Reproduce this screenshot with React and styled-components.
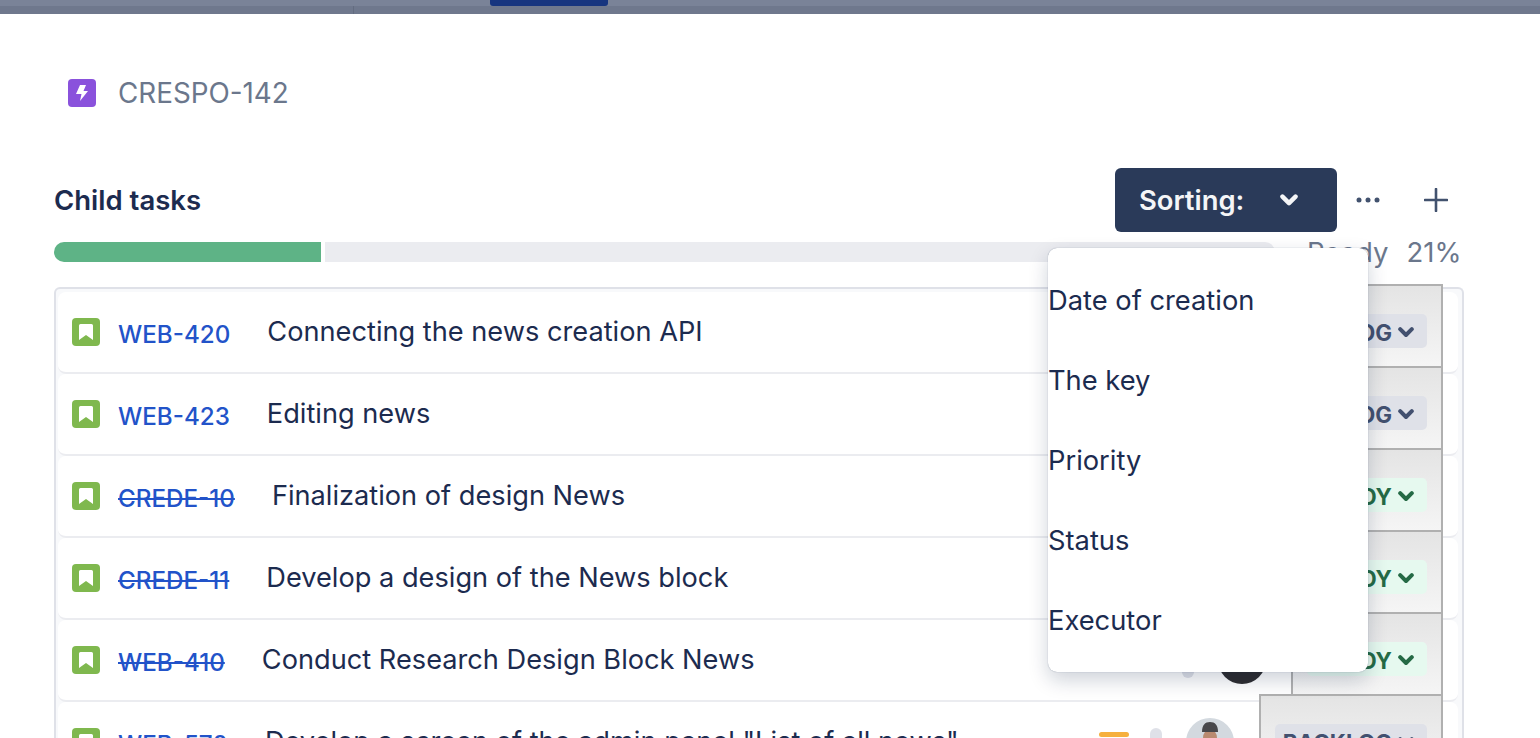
import React from "react";
import styled, { createGlobalStyle } from "styled-components";

const Global = createGlobalStyle`
  html, body { margin: 0; padding: 0; background: #fff; overflow: hidden; }
  body { font-family: Inter, "Liberation Sans", sans-serif; color: #172b4d; }
  #root { height: 738px; overflow: hidden; }
  * { box-sizing: border-box; }
`;

const TopBar = styled.header`
  height: 14px;
  background: #6f788d;
  display: flex;
  flex-direction: column;
`;
const TopTabs = styled.div`
  height: 6px;
  background: #7a8398;
  padding-left: 490px;
`;
const ActiveTab = styled.div`
  width: 118px;
  height: 6px;
  background: #17357f;
  border-radius: 0 0 3px 3px;
`;
const TopStrip = styled.div`
  flex: 1;
  padding-left: 353px;
`;
const StripDivider = styled.div`
  width: 1px;
  height: 100%;
  background: #636c80;
`;

const Main = styled.main`
  padding: 65px 76px 0 54px;
`;
const IssueHead = styled.div`
  display: flex;
  align-items: center;
  gap: 22px;
  height: 28px;
  padding-left: 14px;
`;
const IssueIcon = styled.span`
  width: 28px;
  height: 28px;
  border-radius: 4px;
  background: ${(p) => p.$bg};
  display: flex;
  align-items: center;
  justify-content: center;
  flex: none;
`;
const IssueKey = styled.span`
  font-size: 27.8px;
  color: #6b778c;
`;

const Toolbar = styled.div`
  display: flex;
  align-items: center;
  height: 64px;
  margin-top: 61px;
  padding-right: 16px;
`;
const Title = styled.h2`
  margin: 0;
  font-size: 27.5px;
  font-weight: 600;
  color: #1c2b4f;
  flex: 1;
`;
const SortWrap = styled.div`
  position: relative;
  width: 222px;
  height: 64px;
`;
const SortButton = styled.button`
  width: 100%;
  height: 100%;
  border: 0;
  border-radius: 6px;
  background: #2a3a59;
  color: #f4f5f7;
  font: 600 27.4px Inter, sans-serif;
  display: flex;
  align-items: center;
  padding: 0 39px 0 24px;
  justify-content: space-between;
`;
const Menu = styled.ul`
  position: absolute;
  z-index: 5;
  top: 80px;
  left: -67px;
  width: 320px;
  height: 424px;
  margin: 0;
  padding: 12px 0;
  list-style: none;
  background: #fff;
  border-radius: 9px;
  box-shadow: 0 0 1px rgba(9, 30, 66, 0.45), 0 8px 20px rgba(9, 30, 66, 0.2);
`;
const MenuItem = styled.li`
  height: 80px;
  display: flex;
  align-items: center;
  font-size: 27.3px;
  color: #1c2b4f;
`;
const ToolIcon = styled.button`
  border: 0;
  padding: 0;
  background: none;
  display: flex;
  margin-left: ${(p) => p.$ml}px;
`;
const ProgressRow = styled.div`
  display: flex;
  align-items: center;
  height: 20px;
  margin-top: 10px;
`;
const BarDone = styled.div`
  width: 267px;
  height: 20px;
  flex: none;
  background: #5eb386;
  border-radius: 10px 0 0 10px;
`;
const BarRest = styled.div`
  width: 950px;
  height: 20px;
  flex: none;
  margin-left: 4px;
  background: #ebecf0;
  border-radius: 0 10px 10px 0;
`;
const ProgressLabel = styled.span`
  font-size: 27.5px;
  color: #6b778c;
  margin-left: ${(p) => p.$ml}px;
  white-space: nowrap;
`;

const List = styled.div`
  width: 1410px;
  height: 460px;
  margin-top: 25px;
  padding: 3px 4px 0 2px;
  border: 2px solid #dfe1e8;
  border-bottom: 0;
  border-radius: 6px 6px 0 0;
  background: #f8f9fb;
`;
const Row = styled.div`
  height: 82px;
  display: flex;
  align-items: center;
  padding: 0 15px 0 14px;
  background: #fff;
  border-bottom: 2px solid #ebecf0;
  border-radius: 8px;
`;
const Key = styled.a`
  margin: 4px 0 0 18px;
  font-size: 24.2px;
  font-weight: 500;
  color: #2253c9;
  text-decoration: ${(p) => (p.$done ? "line-through" : "none")};
  white-space: nowrap;
`;
const RowTitle = styled.span`
  margin: 0 0 2px 37px;
  font-size: 27.2px;
  color: #1c2b4f;
  white-space: nowrap;
  flex: 1;
`;
const Priority = styled.div`
  width: 30px;
  display: flex;
  flex-direction: column;
  gap: 10px;
  flex: none;
`;
const PriorityBar = styled.div`
  height: 5px;
  border-radius: 3px;
  background: #f6b03e;
`;
const Points = styled.div`
  width: 12px;
  height: 32px;
  margin: 4px 0 0 21px;
  border-radius: 6px;
  background: #dfe1e8;
  flex: none;
`;
const Avatar = styled.svg`
  width: 48px;
  height: 48px;
  margin-left: 24px;
  border-radius: 50%;
  flex: none;
`;
const StatusCell = styled.div`
  align-self: flex-start;
  height: 84px;
  margin: -8px 0 0 25px;
  padding: 28px 14px 0;
  border: 2px solid #b0b0b0;
  background: linear-gradient(#e4e4e4, #f5f5f5);
  flex: none;
`;
const Chip = styled.div`
  height: 34px;
  display: flex;
  align-items: center;
  gap: 6px;
  padding: 2px 13px 0 8px;
  border-radius: 5px;
  font-size: 22.4px;
  font-weight: 700;
  background: ${(p) => (p.$ready ? "#e6f9ef" : "#dfe1e8")};
  color: ${(p) => (p.$ready ? "#256a45" : "#42506f")};
`;

const Bookmark = () => (
  <IssueIcon $bg="#7fb84e">
    <svg width="14" height="16" viewBox="0 0 14 16">
      <path d="M1.5 0h11A1.5 1.5 0 0 1 14 1.5V16L7 11 0 16V1.5A1.5 1.5 0 0 1 1.5 0z" fill="#fff" />
    </svg>
  </IssueIcon>
);

const Chevron = ({ size = 16, color = "currentColor" }) => (
  <svg width={size} height={size * 0.75} viewBox="0 0 16 12" fill="none">
    <path d="M2.2 3.2L8 9l5.8-5.8" stroke={color} strokeWidth="4" strokeLinecap="round" strokeLinejoin="round" />
  </svg>
);

const DarkFace = () => (
  <Avatar viewBox="0 0 48 48">
    <rect width="48" height="48" fill="#2e2d30" />
  </Avatar>
);
const CapFace = () => (
  <Avatar viewBox="0 0 48 48">
    <rect width="48" height="48" fill="#d3d9df" />
    <ellipse cx="24" cy="20" rx="7" ry="9" fill="#b98a70" />
    <path d="M16 14c0-7 3-10 8-10s8 3 8 10z" fill="#48484b" />
    <path d="M6 48c2-12 10-15 18-15s16 3 18 15z" fill="#5d6a78" />
  </Avatar>
);

const rows = [
  { k: "WEB-420", t: "Connecting the news creation API", a: <DarkFace /> },
  { k: "WEB-423", t: "Editing news", a: <CapFace /> },
  { k: "CREDE-10", t: "Finalization of design News", done: true, ready: true, a: <DarkFace /> },
  { k: "CREDE-11", t: "Develop a design of the News block", done: true, ready: true, a: <DarkFace /> },
  { k: "WEB-410", t: "Conduct Research Design Block News", done: true, ready: true, a: <DarkFace /> },
  { k: "WEB-570", t: 'Develop a screen of the admin panel "List of all news"', a: <CapFace /> },
];

export default function App() {
  return (
    <>
      <Global />
      <TopBar>
        <TopTabs>
          <ActiveTab />
        </TopTabs>
        <TopStrip>
          <StripDivider />
        </TopStrip>
      </TopBar>
      <Main>
        <IssueHead>
          <IssueIcon $bg="#8a52dc">
            <svg width="12" height="16" viewBox="0 0 12 16">
              <path d="M4 0h6L7.5 6H12L4 16l1.5-7H0z" fill="#fff" />
            </svg>
          </IssueIcon>
          <IssueKey>CRESPO-142</IssueKey>
        </IssueHead>
        <Toolbar>
          <Title>Child tasks</Title>
          <SortWrap>
            <SortButton>
              Sorting:
              <Chevron size={18} color="#f4f5f7" />
            </SortButton>
            <Menu>
              {["Date of creation", "The key", "Priority", "Status", "Executor"].map((m) => (
                <MenuItem key={m}>{m}</MenuItem>
              ))}
            </Menu>
          </SortWrap>
          <ToolIcon $ml={19} aria-label="More">
            <svg width="24" height="6" viewBox="0 0 24 6" fill="#42526e">
              <circle cx="3" cy="3" r="2.5" />
              <circle cx="12" cy="3" r="2.5" />
              <circle cx="21" cy="3" r="2.5" />
            </svg>
          </ToolIcon>
          <ToolIcon $ml={44} aria-label="Add">
            <svg width="24" height="24" viewBox="0 0 24 24" stroke="#42526e" strokeWidth="2.6" strokeLinecap="round">
              <path d="M12 1v22M1 12h22" />
            </svg>
          </ToolIcon>
        </Toolbar>
        <ProgressRow>
          <BarDone />
          <BarRest />
          <ProgressLabel $ml={32}>Ready</ProgressLabel>
          <ProgressLabel $ml={18}>21%</ProgressLabel>
        </ProgressRow>
        <List>
          {rows.map((r) => (
            <Row key={r.k}>
              <Bookmark />
              <Key $done={r.done}>{r.k}</Key>
              <RowTitle>{r.t}</RowTitle>
              <Priority>
                <PriorityBar />
                <PriorityBar />
              </Priority>
              <Points />
              {r.a}
              <StatusCell>
                <Chip $ready={r.ready}>
                  {r.ready ? "READY" : "BACKLOG"}
                  <Chevron />
                </Chip>
              </StatusCell>
            </Row>
          ))}
        </List>
      </Main>
    </>
  );
}
